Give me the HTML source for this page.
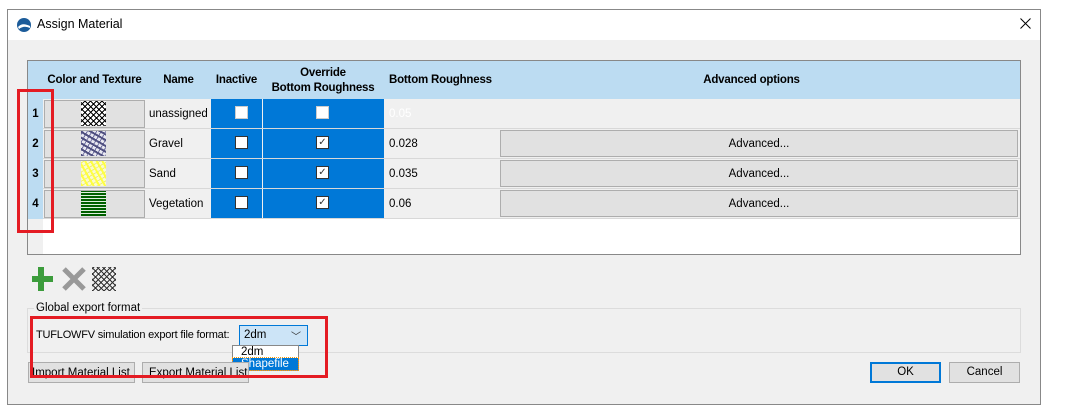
<!DOCTYPE html>
<html><head><style>
*{box-sizing:border-box;margin:0;padding:0}
body{width:1078px;height:416px;background:#fff;position:relative;overflow:hidden;font-family:"Liberation Sans",sans-serif;font-size:11.5px;color:#000}
.a{position:absolute;white-space:nowrap}
.dlg{left:7px;top:9px;width:1034px;height:396px;border:1px solid #888;background:#f0f0f0}
.title{left:8px;top:10px;width:1032px;height:30px;background:#fff}
.hdr{font-weight:bold;text-align:center;font-size:11.5px;letter-spacing:-0.2px}
.blue{background:#0078d7}
.cb{width:13px;height:13px;background:#fff;border:1px solid #333}
.btn{background:#e1e1e1;border:1px solid #adadad;text-align:center}
.num{background:#bcdcf2;font-weight:bold;text-align:center;line-height:30px}
</style></head><body>
<div class="a dlg"></div>
<div class="a title"></div>
<svg class="a" style="left:16px;top:17px" width="16" height="16" viewBox="0 0 16 16"><circle cx="8" cy="8" r="7" fill="#1c5c9a"/><path d="M2 10 Q6 5 14 9 L14 11 Q8 8 3 12Z" fill="#fff"/></svg>
<div class="a" style="left:37px;top:17px;font-size:12.5px">Assign Material</div>
<svg class="a" style="left:1020px;top:18px" width="11" height="11" viewBox="0 0 11 11"><path d="M0.5 0.5L10.5 10.5M10.5 0.5L0.5 10.5" stroke="#000" stroke-width="1"/></svg>

<div class="a" style="left:27px;top:60px;width:994px;height:195px;border:1px solid #888;background:#fff"></div>
<div class="a" style="left:28px;top:61px;width:992px;height:38px;background:#bcdcf2"></div>
<div class="a hdr" style="left:43px;top:74px;width:103px">Color and Texture</div>
<div class="a hdr" style="left:146px;top:74px;width:65px">Name</div>
<div class="a hdr" style="left:211px;top:74px;width:51px">Inactive</div>
<div class="a hdr" style="left:262px;top:66px;width:122px;line-height:15px">Override<br>Bottom Roughness</div>
<div class="a hdr" style="left:389px;top:74px;text-align:left">Bottom Roughness</div>
<div class="a hdr" style="left:483px;top:74px;width:537px">Advanced options</div>
<div class="a" style="left:28px;top:99px;width:15px;height:155px;background:#f0f0f0"></div>

<div class="a" style="left:43px;top:99px;width:977px;height:120px;background:#f0f0f0"></div>
<div class="a" style="left:43px;top:128px;width:977px;height:1px;background:#d8d8d8"></div>
<div class="a" style="left:43px;top:158px;width:977px;height:1px;background:#d8d8d8"></div>
<div class="a" style="left:43px;top:188px;width:977px;height:1px;background:#d8d8d8"></div>
<div class="a" style="left:43px;top:218px;width:977px;height:1px;background:#d8d8d8"></div>

<!-- row 1 -->
<div class="a num" style="left:28px;top:99px;width:15px;height:30px">1</div>
<div class="a btn" style="left:44px;top:100px;width:101px;height:28px"></div>
<div class="a" style="left:81px;top:101px;width:25px;height:25px;background:repeating-linear-gradient(45deg,#000 0 1px,transparent 1px 4px),repeating-linear-gradient(-45deg,#000 0 1px,#fff 1px 4px)"></div>
<div class="a" style="left:149px;top:108px">unassigned</div>
<div class="a blue" style="left:211px;top:99px;width:51px;height:29px"></div>
<div class="a blue" style="left:263px;top:99px;width:121px;height:29px"></div>
<div class="a cb" style="left:235px;top:106px;border-color:#ccc"></div>
<div class="a cb" style="left:316px;top:106px;border-color:#ccc"></div>
<div class="a" style="left:389px;top:108px;color:#fff">0.05</div>

<!-- row 2 -->
<div class="a num" style="left:28px;top:129px;width:15px;height:30px">2</div>
<div class="a btn" style="left:44px;top:130px;width:101px;height:28px"></div>
<div class="a" style="left:81px;top:131px;width:25px;height:25px;background:repeating-linear-gradient(30deg,#505080 0 2px,transparent 2px 5px),repeating-linear-gradient(-60deg,#7070a0 0 1px,#e8e8f0 1px 4px)"></div>
<div class="a" style="left:149px;top:138px">Gravel</div>
<div class="a blue" style="left:211px;top:129px;width:51px;height:29px"></div>
<div class="a blue" style="left:263px;top:129px;width:121px;height:29px"></div>
<div class="a cb" style="left:235px;top:136px"></div>
<div class="a cb" style="left:316px;top:136px;font-size:10px;line-height:11px;text-align:center;color:#333">✓</div>
<div class="a" style="left:389px;top:138px">0.028</div>
<div class="a btn" style="left:500px;top:130px;width:518px;height:27px;line-height:26px">Advanced...</div>

<!-- row 3 -->
<div class="a num" style="left:28px;top:159px;width:15px;height:30px">3</div>
<div class="a btn" style="left:44px;top:160px;width:101px;height:28px"></div>
<div class="a" style="left:81px;top:161px;width:25px;height:25px;background:repeating-linear-gradient(60deg,#ffff40 0 2px,transparent 2px 5px),repeating-linear-gradient(-30deg,#f0f070 0 1px,#fafad0 1px 4px)"></div>
<div class="a" style="left:149px;top:168px">Sand</div>
<div class="a blue" style="left:211px;top:159px;width:51px;height:29px"></div>
<div class="a blue" style="left:263px;top:159px;width:121px;height:29px"></div>
<div class="a cb" style="left:235px;top:166px"></div>
<div class="a cb" style="left:316px;top:166px;font-size:10px;line-height:11px;text-align:center;color:#333">✓</div>
<div class="a" style="left:389px;top:168px">0.035</div>
<div class="a btn" style="left:500px;top:160px;width:518px;height:27px;line-height:26px">Advanced...</div>

<!-- row 4 -->
<div class="a num" style="left:28px;top:189px;width:15px;height:30px">4</div>
<div class="a btn" style="left:44px;top:190px;width:101px;height:28px"></div>
<div class="a" style="left:81px;top:191px;width:25px;height:25px;background:repeating-linear-gradient(0deg,#006000 0 2px,#e0f0e0 2px 3px)"></div>
<div class="a" style="left:149px;top:198px">Vegetation</div>
<div class="a blue" style="left:211px;top:189px;width:51px;height:29px"></div>
<div class="a blue" style="left:263px;top:189px;width:121px;height:29px"></div>
<div class="a cb" style="left:235px;top:196px"></div>
<div class="a cb" style="left:316px;top:196px;font-size:10px;line-height:11px;text-align:center;color:#333">✓</div>
<div class="a" style="left:389px;top:198px">0.06</div>
<div class="a btn" style="left:500px;top:190px;width:518px;height:27px;line-height:26px">Advanced...</div>

<!-- toolbar -->
<svg class="a" style="left:32px;top:267px" width="84" height="24" viewBox="0 0 84 24">
<path d="M5 0h6v9h9v6h-9v9h-6v-9h-9v-6h9z" transform="translate(1,0)" fill="#3c9c3c"/>
<path d="M32 2l20 20M52 2l-20 20" stroke="#999" stroke-width="5"/>
</svg>
<div class="a" style="left:92px;top:267px;width:24px;height:24px;background:repeating-linear-gradient(45deg,#333 0 1px,transparent 1px 4px),repeating-linear-gradient(-45deg,#333 0 1px,#eee 1px 4px)"></div>

<!-- group -->
<div class="a" style="left:27px;top:308px;width:994px;height:45px;border:1px solid #dcdcdc"></div>
<div class="a" style="left:34px;top:302px;background:#f0f0f0;padding:0 2px">Global export format</div>
<div class="a" style="left:36px;top:329px;font-size:11px;letter-spacing:-0.2px">TUFLOWFV simulation export file format:</div>
<div class="a" style="left:239px;top:325px;width:69px;height:21px;border:1px solid #0078d7;background:#cce4f7;padding:3px 0 0 4px">2dm<span style="position:absolute;right:6px;top:2px;font-size:10px;color:#333">﹀</span></div>
<div class="a" style="left:232px;top:345px;width:67px;height:26px;border:1px solid #888;background:#fff;"></div>
<div class="a" style="left:241px;top:346px;width:57px;height:12px;background:#fff;line-height:12px">2dm</div>
<div class="a" style="left:233px;top:358px;width:65px;height:12px;background:#0078d7;color:#fff;line-height:12px;padding-left:8px;outline:1px dotted #f90">Shapefile</div>

<div class="a btn" style="left:28px;top:362px;width:107px;height:21px;line-height:20px;overflow:hidden;text-align:left;padding-left:3px">Import Material List</div>
<div class="a btn" style="left:142px;top:362px;width:107px;height:21px;line-height:20px;overflow:hidden;text-align:left;padding-left:6px">Export Material List</div>
<div class="a btn" style="left:870px;top:362px;width:71px;height:21px;line-height:17px;border:2px solid #0078d7">OK</div>
<div class="a btn" style="left:949px;top:362px;width:71px;height:21px;line-height:19px">Cancel</div>

<!-- red boxes -->
<div class="a" style="left:17px;top:89px;width:37px;height:144px;border:3px solid #e41b23"></div>
<div class="a" style="left:30px;top:316px;width:298px;height:62px;border:3px solid #e41b23"></div>
</body></html>
